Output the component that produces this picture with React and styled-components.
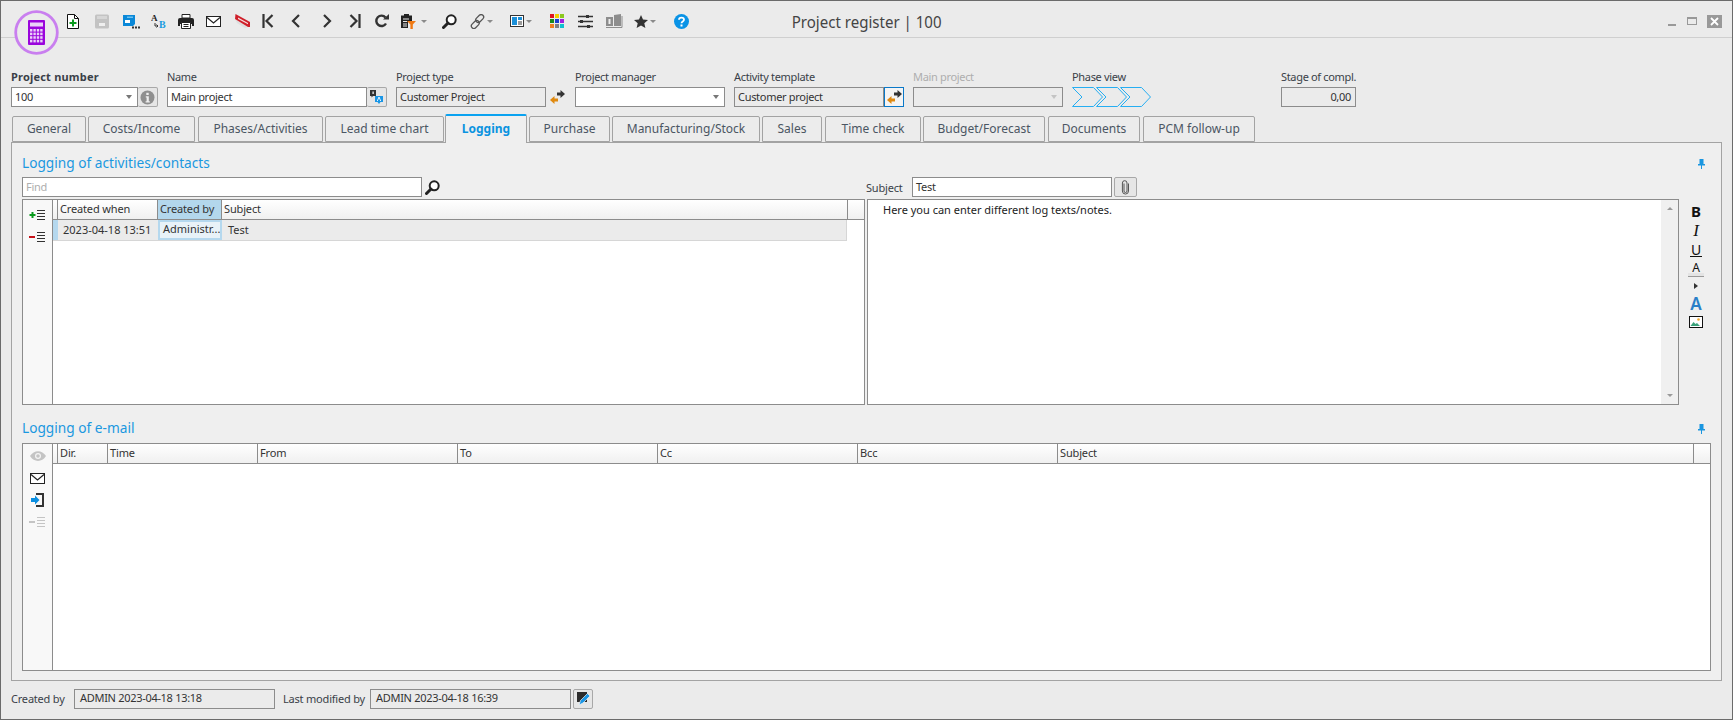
import React from 'react';
import styled, { createGlobalStyle } from 'styled-components';

const FONT = `"Noto Sans", "Open Sans", Arial, sans-serif`;

const Global = createGlobalStyle`
  html, body { margin: 0; padding: 0; background: #ebebeb; }
  body { font-family: ${FONT}; font-size: 11px; color: #333; overflow: hidden; }
  * { box-sizing: border-box; }
`;

const Win = styled.div`
  position: relative;
  width: 1733px;
  height: 720px;
  border: 1px solid #6b6b6b;
  background: #ebebeb;
  display: flex;
  flex-direction: column;
`;
const TitleBar = styled.header`
  height: 37px;
  flex: none;
  border-bottom: 1px solid #cfcfcf;
  display: flex;
  align-items: center;
`;
const BarSide = styled.div`
  flex: 1 1 0;
  min-width: 0;
  display: flex;
  align-items: center;
  justify-content: ${p => (p.$end ? 'flex-end' : 'flex-start')};
`;
const ToolStrip = styled.div`
  display: flex;
  align-items: center;
  margin-left: 59px;
`;
const WinControls = styled.div`
  display: flex;
  align-items: center;
  margin-right: 10px;
`;
const Title = styled.div`
  font-size: 17px;
  color: #444;
  white-space: nowrap;
  margin-top: 4px;
  transform: scaleX(0.885);
`;
const Logo = styled.div`
  position: absolute;
  left: 13px;
  top: 9px;
  width: 45px;
  height: 45px;
  z-index: 2;
`;
const Tool = styled.div`
  flex: none;
  width: ${p => p.$w || 28}px;
  height: 28px;
  display: flex;
  align-items: center;
  padding-left: ${p => p.$pad ?? 4}px;
  margin-top: 4px;
`;
const Caret = styled.span`
  width: 0;
  height: 0;
  margin-left: 2px;
  border-left: 3px solid transparent;
  border-right: 3px solid transparent;
  border-top: 3px solid #8a8a8a;
`;
const WinBtn = styled.div`
  display: flex;
  align-items: center;
  justify-content: center;
  margin-left: ${p => p.$ml || 0}px;
  margin-top: 4px;
`;
const FieldRow = styled.section`
  flex: none;
  display: flex;
  padding: 31px 0 0 10px;
`;
const Field = styled.div`
  flex: 0 0 ${p => p.$w}px;
  display: flex;
  flex-direction: column;
`;
const Label = styled.label`
  height: 16px;
  margin-bottom: 2px;
  line-height: 16px;
  white-space: nowrap;
  color: ${p => (p.$off ? '#aeaeae' : '#3a3f48')};
  font-weight: ${p => (p.$bold ? 700 : 400)};
  letter-spacing: ${p => (p.$bold ? '0.2px' : '-0.33px')};
`;
const Inline = styled.div`
  display: flex;
  align-items: center;
  height: 20px;
`;
const Input = styled.div`
  height: 20px;
  width: ${p => p.$w}px;
  flex: none;
  border: 1px solid #8c8c8c;
  background: ${p => (p.$ro ? '#ebebeb' : '#fff')};
  display: flex;
  align-items: center;
  justify-content: ${p => (p.$right ? 'flex-end' : 'space-between')};
  padding: 0 ${p => (p.$right ? 4 : 3)}px 2px ${p => p.$pl ?? 3}px;
  color: ${p => (p.$muted ? '#aeaeae' : '#333')};
  white-space: nowrap;
  overflow: hidden;
  letter-spacing: -0.3px;
`;
const SmallBtn = styled.div`
  width: ${p => p.$w || 20}px;
  height: 20px;
  flex: none;
  display: flex;
  align-items: center;
  justify-content: center;
  border: 1px solid ${p => (p.$active ? '#0a78c8' : '#a8a8a8')};
  border-left-width: ${p => (p.$attached ? 0 : 1)}px;
  border-radius: ${p => (p.$active ? 0 : 2)}px;
  background: ${p => (p.$active ? '#f4f4f4' : '#e6e6e6')};
  margin-left: ${p => p.$ml || 0}px;
`;
const PlainIcon = styled.span`
  width: 18px;
  height: 20px;
  flex: none;
  margin-left: 2px;
  display: flex;
  align-items: center;
  justify-content: center;
`;
const DownCaret = styled.span`
  width: 0;
  height: 0;
  margin-right: 2px;
  margin-top: 2px;
  border-left: 3.5px solid transparent;
  border-right: 3.5px solid transparent;
  border-top: 4px solid ${p => (p.$off ? '#c4c4c4' : '#777')};
`;
const Tabs = styled.nav`
  flex: none;
  height: 29px;
  margin: 6px 0 0 10px;
  display: flex;
  align-items: flex-end;
  position: relative;
  z-index: 1;
`;
const Tab = styled.div`
  width: ${p => p.$w}px;
  margin-left: ${p => p.$ml}px;
  flex: none;
  height: ${p => (p.$on ? 29 : 26)}px;
  margin-bottom: ${p => (p.$on ? -1 : 0)}px;
  display: flex;
  align-items: center;
  justify-content: center;
  padding-bottom: 2px;
  font-size: 12px;
  color: ${p => (p.$on ? '#0a93e0' : '#4b5663')};
  font-weight: ${p => (p.$on ? 700 : 400)};
  background: ${p => (p.$on ? '#efefef' : '#ececec')};
  border: 1px solid #a3a3a3;
  border-bottom: ${p => (p.$on ? 'none' : '1px solid #a3a3a3')};
  border-top: ${p => (p.$on ? '2px solid #0aa2f0' : '1px solid #a3a3a3')};
  border-radius: 2px 2px 0 0;
`;
const Panel = styled.main`
  flex: none;
  width: 1711px;
  height: 539px;
  margin-left: 10px;
  border: 1px solid #a3a3a3;
  background: #efefef;
  padding: 12px 10px 10px;
`;
const SectionHead = styled.div`
  height: 17px;
  display: flex;
  align-items: center;
  justify-content: space-between;
  margin-top: ${p => p.$mt || 0}px;
  margin-bottom: ${p => p.$mb}px;
`;
const SectionTitle = styled.h2`
  margin: -2px 0 0;
  font-size: 13.7px;
  font-weight: 400;
  color: #1b98e0;
  white-space: nowrap;
`;
const Pin = styled.span`
  display: flex;
  margin-right: 6px;
`;
const Upper = styled.div`
  display: grid;
  grid-template-columns: 843px 812px 1fr;
  grid-template-rows: 20px 206px;
  column-gap: 2px;
  row-gap: 2px;
`;
const FindRow = styled.div`
  display: flex;
  align-items: center;
  gap: 3px;
`;
const SubjectRow = styled.div`
  display: flex;
  align-items: center;
`;
const SubjectLabel = styled.span`
  width: 45px;
  flex: none;
  color: #3a3f48;
  margin-left: -1px;
  margin-right: 1px;
  letter-spacing: -0.2px;
`;
const Spacer = styled.div``;
const GridBox = styled.div`
  display: flex;
  height: ${p => p.$h || '100%'};
  width: ${p => p.$w || '100%'};
  border: 1px solid #8c8c8c;
  background: #fff;
`;
const SideTools = styled.div`
  flex: 0 0 30px;
  background: #f8f8f8;
  border-right: 1px solid #8c8c8c;
  display: flex;
  flex-direction: column;
  align-items: center;
  padding-top: ${p => p.$pt}px;
  gap: ${p => p.$gap}px;
`;
const SideIcon = styled.div`
  height: 16px;
  display: flex;
  align-items: center;
  justify-content: center;
`;
const GridMain = styled.div`
  flex: 1;
  min-width: 0;
  display: flex;
  flex-direction: column;
`;
const HeadRow = styled.div`
  height: 20px;
  flex: none;
  display: flex;
  border-bottom: 1px solid #8c8c8c;
  background: linear-gradient(#ffffff, #f0f0f0);
`;
const HeadCell = styled.div`
  flex: ${p => (p.$w ? `0 0 ${p.$w}px` : '1')};
  border-right: ${p => (p.$w ? '1px solid #8c8c8c' : 'none')};
  background: ${p => (p.$sel ? '#b3d7ec' : 'transparent')};
  padding-left: 2px;
  line-height: 18px;
  color: #333;
  white-space: nowrap;
  overflow: hidden;
  letter-spacing: -0.15px;
`;
const DataRow = styled.div`
  height: 21px;
  width: 794px;
  display: flex;
  background: #ebebeb;
  border-bottom: 1px solid #d6d6d6;
  border-right: 1px solid #d6d6d6;
`;
const DataCell = styled.div`
  flex: ${p => (p.$w ? `0 0 ${p.$w}px` : '1')};
  display: flex;
  align-items: center;
  padding-left: ${p => p.$pl ?? 0}px;
  padding-bottom: ${p => (p.$sel ? 0 : 2)}px;
  color: #333;
  white-space: nowrap;
  overflow: hidden;
  background: ${p => (p.$sel ? '#b5d8ee' : 'transparent')};
`;
const FocusBox = styled.div`
  margin: 2px;
  height: 16px;
  flex: 1;
  background: #e8f2f8;
  padding-left: 3px;
  line-height: 14px;
  overflow: hidden;
`;
const Editor = styled.div`
  display: flex;
  border: 1px solid #8c8c8c;
  background: #fff;
`;
const EditorText = styled.div`
  flex: 1;
  padding: 2px 0 0 15px;
  color: #222;
  line-height: 16px;
`;
const Scroll = styled.div`
  flex: 0 0 17px;
  background: #f0f0f0;
  display: flex;
  flex-direction: column;
  justify-content: space-between;
  align-items: center;
  padding: 7px 0;
`;
const Tri = styled.span`
  width: 0;
  height: 0;
  border-left: 3px solid transparent;
  border-right: 3px solid transparent;
  border-${p => (p.$up ? 'bottom' : 'top')}: 3px solid #9a9a9a;
`;
const FormatBar = styled.div`
  display: flex;
  flex-direction: column;
  align-items: center;
  padding-top: 2px;
  width: 30px;
`;
const FmtGlyph = styled.div`
  height: ${p => p.$h}px;
  display: flex;
  align-items: center;
  justify-content: center;
  font-family: ${p => (p.$serif ? '"Liberation Serif", serif' : FONT)};
  font-size: ${p => p.$size || 14}px;
  font-weight: ${p => p.$fw || 400};
  font-style: ${p => (p.$i ? 'italic' : 'normal')};
  color: ${p => p.$c || '#111'};
  line-height: 1;
`;
const UnderU = styled.span`
  border-bottom: 1px solid #111;
  padding: 0 1px;
  line-height: 13px;
`;
const FillA = styled.span`
  font-size: 12px;
  line-height: 11px;
  border-bottom: 3px solid #e4e4e4;
  box-shadow: 0 1px 0 #9a9a9a;
  padding: 0 4px;
`;
const Footer = styled.footer`
  flex: 1;
  display: flex;
  align-items: center;
  padding: 0 0 3px 10px;
`;
const FootLabel = styled.span`
  flex: 0 0 ${p => p.$w}px;
  padding-left: ${p => p.$pl || 0}px;
  color: #3a3f48;
  white-space: nowrap;
  letter-spacing: -0.2px;
`;

const ToolIcons = {
  New: () => (<svg width="14" height="15" viewBox="0 0 14 15"><path d="M1.5.5h7l4 4v10h-11z" fill="#fff" stroke="#111"/><path d="M8.5.5v4h4" fill="none" stroke="#111"/><path d="M6 5.5h2v2.5h2.5v2H8v2.5H6V10H3.5V8H6z" fill="#0a9a1e"/></svg>),
  Save: () => (<svg width="16" height="15" viewBox="0 0 16 15"><rect x="1" y="0.5" width="14" height="14" rx="1.5" fill="#c3c3c3"/><rect x="3" y="2" width="10" height="3" fill="#d6d6d6"/><rect x="5" y="9" width="6" height="3" fill="#efefef"/></svg>),
  SaveAs: () => (<svg width="18" height="15" viewBox="0 0 18 15"><path d="M1 1h12v9l-2 2H1z" fill="#0a88d8"/><rect x="3" y="6" width="5" height="3" fill="#fff"/><rect x="5" y="2.5" width="6" height="1.5" fill="#6cc0f0"/><rect x="10" y="12.5" width="2" height="2" fill="#333"/><rect x="13" y="12.5" width="2" height="2" fill="#333"/><rect x="16" y="12.5" width="2" height="2" fill="#333"/></svg>),
  AB: () => (<svg width="16" height="16" viewBox="0 0 16 16"><text x="0" y="8" fontFamily="Liberation Serif" fontWeight="700" fontSize="9" fill="#222">A</text><text x="8" y="15" fontFamily="Liberation Serif" fontWeight="700" fontSize="10" fill="#1a9be0">B</text><path d="M4 10v3h3M5.5 11.5 7 13l-1.500 1.500" fill="none" stroke="#333"/></svg>),
  Print: () => (<svg width="16" height="15" viewBox="0 0 16 15"><path d="M4 .5h8V4H4z" fill="#fff" stroke="#222"/><path d="M2 4h12a2 2 0 0 1 2 2v6h-2v-2H2v2H0V6a2 2 0 0 1 2-2z" fill="#222"/><path d="M3.500 8.500h9v6h-9z" fill="#fff" stroke="#222"/><path d="M5.500 10.500h5M5.500 12.500h5" stroke="#222"/></svg>),
  Mail: () => (<svg width="15" height="11" viewBox="0 0 15 11"><rect x="0.500" y="0.500" width="14" height="10" fill="#fff" stroke="#222"/><path d="M1 1.500 7.500 7 14 1.500" fill="none" stroke="#222" strokeWidth="1.200"/></svg>),
  Eraser: () => (<svg width="15" height="14" viewBox="0 0 15 14"><path d="M0 5l13 8-3 1-8-5z" fill="#dedede"/><path d="M.5 0 15 8v5h-2L0 5z" fill="#cf1f2a"/><path d="M3 3.500 13 9v1.200L3 5z" fill="#f8dcdc"/></svg>),
  First: () => (<svg width="12" height="14" viewBox="0 0 12 14"><path d="M1.500 0v14" stroke="#333" strokeWidth="2.200"/><path d="M10.500 1 4.500 7l6 6" fill="none" stroke="#333" strokeWidth="2.200"/></svg>),
  Prev: () => (<svg width="10" height="14" viewBox="0 0 10 14"><path d="M8 1 2 7l6 6" fill="none" stroke="#333" strokeWidth="2.200"/></svg>),
  Next: () => (<svg width="10" height="14" viewBox="0 0 10 14"><path d="M2 1l6 6-6 6" fill="none" stroke="#333" strokeWidth="2.200"/></svg>),
  Last: () => (<svg width="12" height="14" viewBox="0 0 12 14"><path d="M10.500 0v14" stroke="#333" strokeWidth="2.200"/><path d="M1.500 1l6 6-6 6" fill="none" stroke="#333" strokeWidth="2.200"/></svg>),
  Refresh: () => (<svg width="15" height="14" viewBox="0 0 15 14"><path d="M11.500 3.500A5.200 5.200 0 1 0 12 9.500" fill="none" stroke="#333" strokeWidth="2.400"/><path d="M9 5.500h6V0z" fill="#333"/></svg>),
  Paste: () => (<svg width="19" height="16" viewBox="0 0 19 16"><path d="M1 2.500h3V1h5v1.500h3V8H8v7H1z" fill="#222"/><path d="M3 6h6M3 8.500h4M3 11h4M3 13h4" stroke="#fff" strokeWidth="0.900"/><path d="M7 8h9l-3.200 3.500V16h-2.400v-4.500z" fill="#f07a14"/></svg>),
  Search: () => (<svg width="15" height="15" viewBox="0 0 15 15"><circle cx="9.200" cy="5.800" r="4.500" fill="#fff" stroke="#222" strokeWidth="2"/><path d="M6 9 1.500 13.500" stroke="#222" strokeWidth="3" strokeLinecap="round"/></svg>),
  Link: () => (<svg width="15" height="15" viewBox="0 0 15 15"><g fill="none" stroke="#555" strokeWidth="1.300"><rect x="7.200" y="0" width="5" height="9" rx="2.500" transform="rotate(45 9.700 4.500)"/><rect x="2.800" y="6" width="5" height="9" rx="2.500" transform="rotate(45 5.300 10.500)"/></g></svg>),
  Layout: () => (<svg width="14" height="12" viewBox="0 0 14 12"><rect x="0.500" y="0.500" width="13" height="11" fill="#fff" stroke="#333"/><rect x="2" y="2" width="5" height="8" fill="#1b8fd8"/><rect x="8" y="2" width="4" height="3" fill="#1b8fd8"/><rect x="8" y="6" width="4" height="4" fill="#9a9a9a"/></svg>),
  Colors: () => (<svg width="14" height="14" viewBox="0 0 14 14">{['#e0141c', '#f0d000', '#8cc81e', '#1a8a1a', '#1a3fd0', '#a020e0', '#f08020', '#808080', '#10c0d0'].map((c, i) => (<rect key={c} x={(i % 3) * 5} y={Math.floor(i / 3) * 5} width="4" height="4" fill={c} />))}</svg>),
  Sliders: () => (<svg width="15" height="13" viewBox="0 0 15 13"><path d="M0 1.500h15M0 6.500h15M0 11.500h15" stroke="#333" strokeWidth="1.400"/><rect x="8" y="0" width="3" height="3" fill="#333"/><rect x="2" y="5" width="3" height="3" fill="#333"/><rect x="9" y="10" width="3" height="3" fill="#333"/></svg>),
  Book: () => (<svg width="17" height="14" viewBox="0 0 17 14"><path d="M0 3h7v9H0zM8 1l7-1v12H8z" fill="#8d8d8d"/><rect x="2.500" y="5" width="2" height="5" fill="#eee"/><path d="M16 2v11.500H0" fill="none" stroke="#8d8d8d"/></svg>),
  Star: () => (<svg width="14" height="13" viewBox="0 0 14 13"><path d="M7 0l2 4.500 5 .5-3.700 3.300 1.100 4.700L7 10.500 2.600 13l1.100-4.700L0 5l5-.5z" fill="#333"/></svg>),
  Help: () => (<svg width="15" height="15" viewBox="0 0 15 15"><circle cx="7.500" cy="7.500" r="7.500" fill="#0a93e6"/><path d="M5 5.800c0-3 5-3 5 0 0 1.800-2.500 1.800-2.500 3.500" fill="none" stroke="#fff" strokeWidth="1.800"/><rect x="6.500" y="10.500" width="2" height="2" fill="#fff"/></svg>),
};

const Swap = () => (<svg width="15" height="14" viewBox="0 0 15 14"><path d="M7 2.500h3.500V0L15 4l-4.500 4V5.500H7z" fill="#333"/><path d="M8 8.500H4.500V6L0 10l4.500 4v-2.500H8z" fill="#e08a10"/></svg>);
const Info = () => (<svg width="15" height="15" viewBox="0 0 15 15"><circle cx="7.500" cy="7.500" r="7" fill="#8f8f8f"/><rect x="6.300" y="2.800" width="2.400" height="2.200" fill="#eee"/><path d="M5.800 6.200h3v5h1v1.300H5.600v-1.300h1V7.500h-.8z" fill="#eee"/></svg>);
const Lang = () => (<svg width="15" height="16" viewBox="0 0 15 16"><path d="M1 1h6v6H4L2.500 8.500V7H1z" fill="#333"/><rect x="3.500" y="2.500" width="1.200" height="2.500" fill="#fff"/><path d="M6 7h8v6h-2.500L10 15l-1.500-2H6z" fill="#1a96e6"/><path d="M8.300 12l1.700-4 1.700 4" fill="none" stroke="#fff" strokeWidth="0.900"/></svg>);
const Phases = () => (<svg width="79" height="20" viewBox="0 0 79 20"><g fill="none" stroke="#26aef2"><path d="M.5.500h21l9 9.500-9 9.500H.5L10 10z"/><path d="M24.500.500h21l9 9.500-9 9.500h-21L34 10z"/><path d="M48.500.500h21l9 9.500-9 9.500h-21L58 10z"/></g></svg>);
const PinIcon = () => (<svg width="7" height="10" viewBox="0 0 7 10"><path d="M1.500 0h4v5H7v1.500H4V10H3V6.500H0V5h1.500z" fill="#1a96e0"/></svg>);
const Clip = () => (<svg width="9" height="15" viewBox="0 0 9 15"><path d="M3 3.500v7.500a1.500 1.500 0 0 0 3 0V3a2.300 2.300 0 0 0-4.600 0v8a3 3 0 0 0 6.100 0V3.500" fill="none" stroke="#555"/></svg>);
const AddList = () => (<svg width="17" height="11" viewBox="0 0 17 11"><path d="M2 4h2V2h2v2h2v2H6v2H4V6H2z" fill="#0a9a1e" transform="translate(-1.500 0)"/><path d="M8 .5h8M8 3.500h8M8 6.500h8M8 9.500h8" stroke="#333"/></svg>);
const DelList = ({ c = '#c8121a', l = '#333' }) => (<svg width="17" height="11" viewBox="0 0 17 11"><rect x="0" y="4" width="6" height="2" fill={c}/><path d="M8 .5h8M8 3.500h8M8 6.500h8M8 9.500h8" stroke={l}/></svg>);
const Eye = () => (<svg width="16" height="10" viewBox="0 0 16 10"><path d="M0 5c4-6.500 12-6.500 16 0-4 6.500-12 6.500-16 0z" fill="#c4c4c4"/><circle cx="8" cy="5" r="3" fill="#f4f4f4"/><circle cx="8" cy="5" r="1.800" fill="#c4c4c4"/></svg>);
const Import = () => (<svg width="13" height="14" viewBox="0 0 13 14"><path d="M5 1h7v12H5" fill="none" stroke="#333" strokeWidth="2"/><path d="M0 5h4V2.500L8.500 7 4 11.500V9H0z" fill="#0a8ee0"/></svg>);
const Pic = () => (<svg width="14" height="12" viewBox="0 0 14 12"><rect x="0.500" y="0.500" width="13" height="11" fill="#fff" stroke="#111"/><path d="M1.500 10l3-4 2 2 1.500-1 3 3z" fill="#3aa27a"/><circle cx="9.500" cy="3.500" r="1.300" fill="#f0a830"/></svg>);
const Note = () => (<svg width="15" height="15" viewBox="0 0 15 15"><path d="M1 1h10v10H1z" fill="#2c2c2c"/><path d="M3 14 4.500 9.500 11.500 2.500 14 5l-7 7z" fill="#1a96e6" stroke="#f4f4f4" strokeWidth="0.700"/></svg>);
const LogoIcon = () => (<svg width="45" height="45" viewBox="0 0 45 45"><circle cx="22.500" cy="22.500" r="20.800" fill="#ebebeb" stroke="#c97fef" strokeWidth="2.800"/><rect x="14" y="10" width="17" height="25" rx="1" fill="#9a05dc"/><rect x="16" y="12.500" width="13" height="4" fill="#ead0f8"/>{[0, 1, 2, 3].map(c => [0, 1, 2, 3].map(r => (<rect key={`${c}-${r}`} x={16 + c * 3.400} y={19 + r * 3.600} width="2.400" height="2.600" fill="#ead0f8" />)))}</svg>);

const tools = [
  ['New', 28, 6], ['Save', 28, 6], ['SaveAs', 28, 6], ['AB', 28, 7], ['Print', 28, 6], ['Mail', 28, 6], ['Eraser', 26, 7],
  ['First', 30, 8], ['Prev', 30, 7], ['Next', 28, 8], ['Last', 26, 7], ['Refresh', 26, 6],
  ['Paste', 40, 6, true], ['Search', 28, 8], ['Link', 40, 8, true], ['Layout', 40, 8, true], ['Colors', 28, 8], ['Sliders', 28, 8], ['Book', 28, 8], ['Star', 40, 8, true], ['Help', 28, 8],
];
const tabs = [
  ['General', 74, 1], ['Costs/Income', 107, 2], ['Phases/Activities', 125, 3], ['Lead time chart', 119, 2],
  ['Logging', 82, 1], ['Purchase', 81, 2], ['Manufacturing/Stock', 148, 2], ['Sales', 60, 2], ['Time check', 96, 3],
  ['Budget/Forecast', 122, 2], ['Documents', 92, 3], ['PCM follow-up', 112, 3],
];
const emailCols = [['', 5], ['Dir.', 50], ['Time', 150], ['From', 200], ['To', 200], ['Cc', 200], ['Bcc', 200], ['Subject', 636], ['']];

export default function App() {
  return (
    <Win>
      <Global />
      <Logo><LogoIcon /></Logo>
      <TitleBar>
        <BarSide>
          <ToolStrip>
            {tools.map(([name, w, pad, caret]) => {
              const Ico = ToolIcons[name];
              return (
                <Tool key={name} $w={w} $pad={pad}>
                  <Ico />
                  {caret && <Caret />}
                </Tool>
              );
            })}
          </ToolStrip>
        </BarSide>
        <Title>Project register | 100</Title>
        <BarSide $end>
          <WinControls>
            <WinBtn><svg width="9" height="14" viewBox="0 0 9 14"><rect x="0" y="10" width="8" height="2" fill="#999" /></svg></WinBtn>
            <WinBtn $ml={10}><svg width="10" height="8" viewBox="0 0 10 8"><rect x="0.500" y="0.500" width="9" height="7" fill="none" stroke="#999" /><rect x="0" y="0" width="10" height="2" fill="#999" /></svg></WinBtn>
            <WinBtn $ml={10}><svg width="15" height="13" viewBox="0 0 15 13"><rect width="15" height="13" fill="#999" /><path d="M4 3l7 7M11 3l-7 7" stroke="#fff" strokeWidth="1.800" /></svg></WinBtn>
          </WinControls>
        </BarSide>
      </TitleBar>

      <FieldRow>
        <Field $w={156}>
          <Label $bold>Project number</Label>
          <Inline>
            <Input $w={127}>100<DownCaret /></Input>
            <SmallBtn $attached><Info /></SmallBtn>
          </Inline>
        </Field>
        <Field $w={229}>
          <Label>Name</Label>
          <Inline>
            <Input $w={200}>Main project</Input>
            <SmallBtn $w={20} $attached><Lang /></SmallBtn>
          </Inline>
        </Field>
        <Field $w={179}>
          <Label>Project type</Label>
          <Inline>
            <Input $w={150} $ro>Customer Project</Input>
            <PlainIcon><Swap /></PlainIcon>
          </Inline>
        </Field>
        <Field $w={159}>
          <Label>Project manager</Label>
          <Inline><Input $w={150}><span /><DownCaret /></Input></Inline>
        </Field>
        <Field $w={179}>
          <Label>Activity template</Label>
          <Inline>
            <Input $w={150} $ro>Customer project</Input>
            <SmallBtn $active $w={20}><Swap /></SmallBtn>
          </Inline>
        </Field>
        <Field $w={159}>
          <Label $off>Main project</Label>
          <Inline><Input $w={150} $ro><span /><DownCaret $off /></Input></Inline>
        </Field>
        <Field $w={209}>
          <Label>Phase view</Label>
          <Inline><Phases /></Inline>
        </Field>
        <Field $w={76}>
          <Label>Stage of compl.</Label>
          <Inline><Input $w={75} $ro $right>0,00</Input></Inline>
        </Field>
      </FieldRow>

      <Tabs>
        {tabs.map(([t, w, ml]) => (<Tab key={t} $w={w} $ml={ml} $on={t === 'Logging'}>{t}</Tab>))}
      </Tabs>

      <Panel>
        <SectionHead $mb={5}>
          <SectionTitle>Logging of activities/contacts</SectionTitle>
          <Pin><PinIcon /></Pin>
        </SectionHead>
        <Upper>
          <FindRow>
            <Input $w={400} $muted>Find</Input>
            <ToolIcons.Search />
          </FindRow>
          <SubjectRow>
            <SubjectLabel>Subject</SubjectLabel>
            <Input $w={200}>Test</Input>
            <SmallBtn $w={23} $ml={2}><Clip /></SmallBtn>
          </SubjectRow>
          <Spacer />
          <GridBox>
            <SideTools $pt={7} $gap={6}>
              <SideIcon><AddList /></SideIcon>
              <SideIcon><DelList /></SideIcon>
            </SideTools>
            <GridMain>
              <HeadRow>
                <HeadCell $w={5} />
                <HeadCell $w={100}>Created when</HeadCell>
                <HeadCell $w={64} $sel>Created by</HeadCell>
                <HeadCell $w={626}>Subject</HeadCell>
                <HeadCell />
              </HeadRow>
              <DataRow>
                <DataCell $w={5} $sel />
                <DataCell $w={100} $pl={5}>2023-04-18 13:51</DataCell>
                <DataCell $w={64} $sel><FocusBox>Administr...</FocusBox></DataCell>
                <DataCell $pl={6}>Test</DataCell>
              </DataRow>
            </GridMain>
          </GridBox>
          <Editor>
            <EditorText>Here you can enter different log texts/notes.</EditorText>
            <Scroll><Tri $up /><Tri /></Scroll>
          </Editor>
          <FormatBar>
            <FmtGlyph $h={20} $fw={700} $size={15}>B</FmtGlyph>
            <FmtGlyph $h={18} $serif $i $size={17}>I</FmtGlyph>
            <FmtGlyph $h={22} $size={14}><UnderU>U</UnderU></FmtGlyph>
            <FmtGlyph $h={16} $size={11}><FillA>A</FillA></FmtGlyph>
            <FmtGlyph $h={18}><svg width="4" height="6" viewBox="0 0 4 6"><path d="M0 0l4 3-4 3z" fill="#333" /></svg></FmtGlyph>
            <FmtGlyph $h={16} $size={17} $fw={600} $c="#2a7fc8">A</FmtGlyph>
            <FmtGlyph $h={22}><Pic /></FmtGlyph>
          </FormatBar>
        </Upper>

        <SectionHead $mt={15} $mb={6}>
          <SectionTitle>Logging of e-mail</SectionTitle>
          <Pin><PinIcon /></Pin>
        </SectionHead>
        <GridBox $h="228px" $w="1689px">
          <SideTools $pt={4} $gap={6}>
            <SideIcon><Eye /></SideIcon>
            <SideIcon><ToolIcons.Mail /></SideIcon>
            <SideIcon><Import /></SideIcon>
            <SideIcon><DelList c="#c4c4c4" l="#c4c4c4" /></SideIcon>
          </SideTools>
          <GridMain>
            <HeadRow>
              {emailCols.map(([t, w], i) => (<HeadCell key={i} $w={w}>{t}</HeadCell>))}
            </HeadRow>
          </GridMain>
        </GridBox>
      </Panel>

      <Footer>
        <FootLabel $w={63}>Created by</FootLabel>
        <Input $w={201} $ro $pl={5}>ADMIN 2023-04-18 13:18</Input>
        <FootLabel $w={95} $pl={8}>Last modified by</FootLabel>
        <Input $w={201} $ro $pl={5}>ADMIN 2023-04-18 16:39</Input>
        <SmallBtn $w={20} $ml={2}><Note /></SmallBtn>
      </Footer>
    </Win>
  );
}
